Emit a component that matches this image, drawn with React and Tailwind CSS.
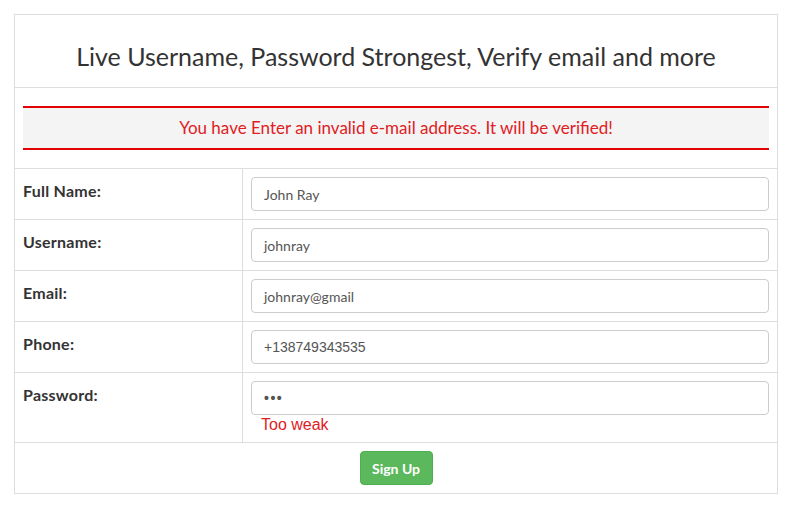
export default function App() {
  const rows = [
    { label: "Full Name:", value: "John Ray" },
    { label: "Username:", value: "johnray" },
    { label: "Email:", value: "johnray@gmail" },
    { label: "Phone:", value: "+138749343535", arial: true },
  ];
  return (
    <div className="w-[792px] h-[523px] bg-white pl-[14px] pt-[14px] font-['Lato',sans-serif] text-[#333]">
      <div className="w-[764px] border border-[#dddddd]">
        <div className="h-[73px] border-b border-[#dddddd] flex items-center justify-center">
          <h3 className="text-[25px] leading-none pt-[10px]">Live Username, Password Strongest, Verify email and more</h3>
        </div>
        <div className="h-[81px] border-b border-[#dddddd] px-[8px] pt-[18px]">
          <div className="h-[44px] bg-[#f4f4f4] border-y-2 border-[#e30000] flex items-center justify-center text-[17px] text-[#e0201f]">
            You have Enter an invalid e-mail address. It will be verified!
          </div>
        </div>
        {rows.map((r) => (
          <div key={r.label} className="grid grid-cols-[228px_1fr] border-b border-[#dddddd] h-[51px]">
            <div className="border-r border-[#dddddd] pl-[8px] pt-[12px] text-[16px] leading-[20px] font-bold tracking-[0.25px]">{r.label}</div>
            <div className="px-[8px] pt-[8px]">
              <div className={`h-[34px] border border-[#cccccc] rounded-[4px] flex items-center pl-[12px] text-[14px] text-[#555] ${r.arial ? "font-['Liberation_Sans',sans-serif]" : ""}`}>
                {r.value}
              </div>
            </div>
          </div>
        ))}
        <div className="grid grid-cols-[228px_1fr] border-b border-[#dddddd] h-[70px]">
          <div className="border-r border-[#dddddd] pl-[8px] pt-[12px] text-[16px] leading-[20px] font-bold tracking-[0.25px]">Password:</div>
          <div className="px-[8px] pt-[8px]">
            <div className="h-[34px] border border-[#cccccc] rounded-[4px] flex items-center pl-[12px] text-[14px] text-[#555] font-['Liberation_Sans',sans-serif] font-bold tracking-[1.5px]">
              •••
            </div>
            <div className="pl-[10px] text-[16px] leading-[20px] text-[#e0201f] font-['Liberation_Sans',sans-serif]">Too weak</div>
          </div>
        </div>
        <div className="h-[50px] flex items-center justify-center">
          <button className="w-[73px] h-[34px] bg-[#5cb85c] border border-[#4cae4c] rounded-[4px] text-white text-[14px] font-bold">Sign Up</button>
        </div>
      </div>
    </div>
  );
}
